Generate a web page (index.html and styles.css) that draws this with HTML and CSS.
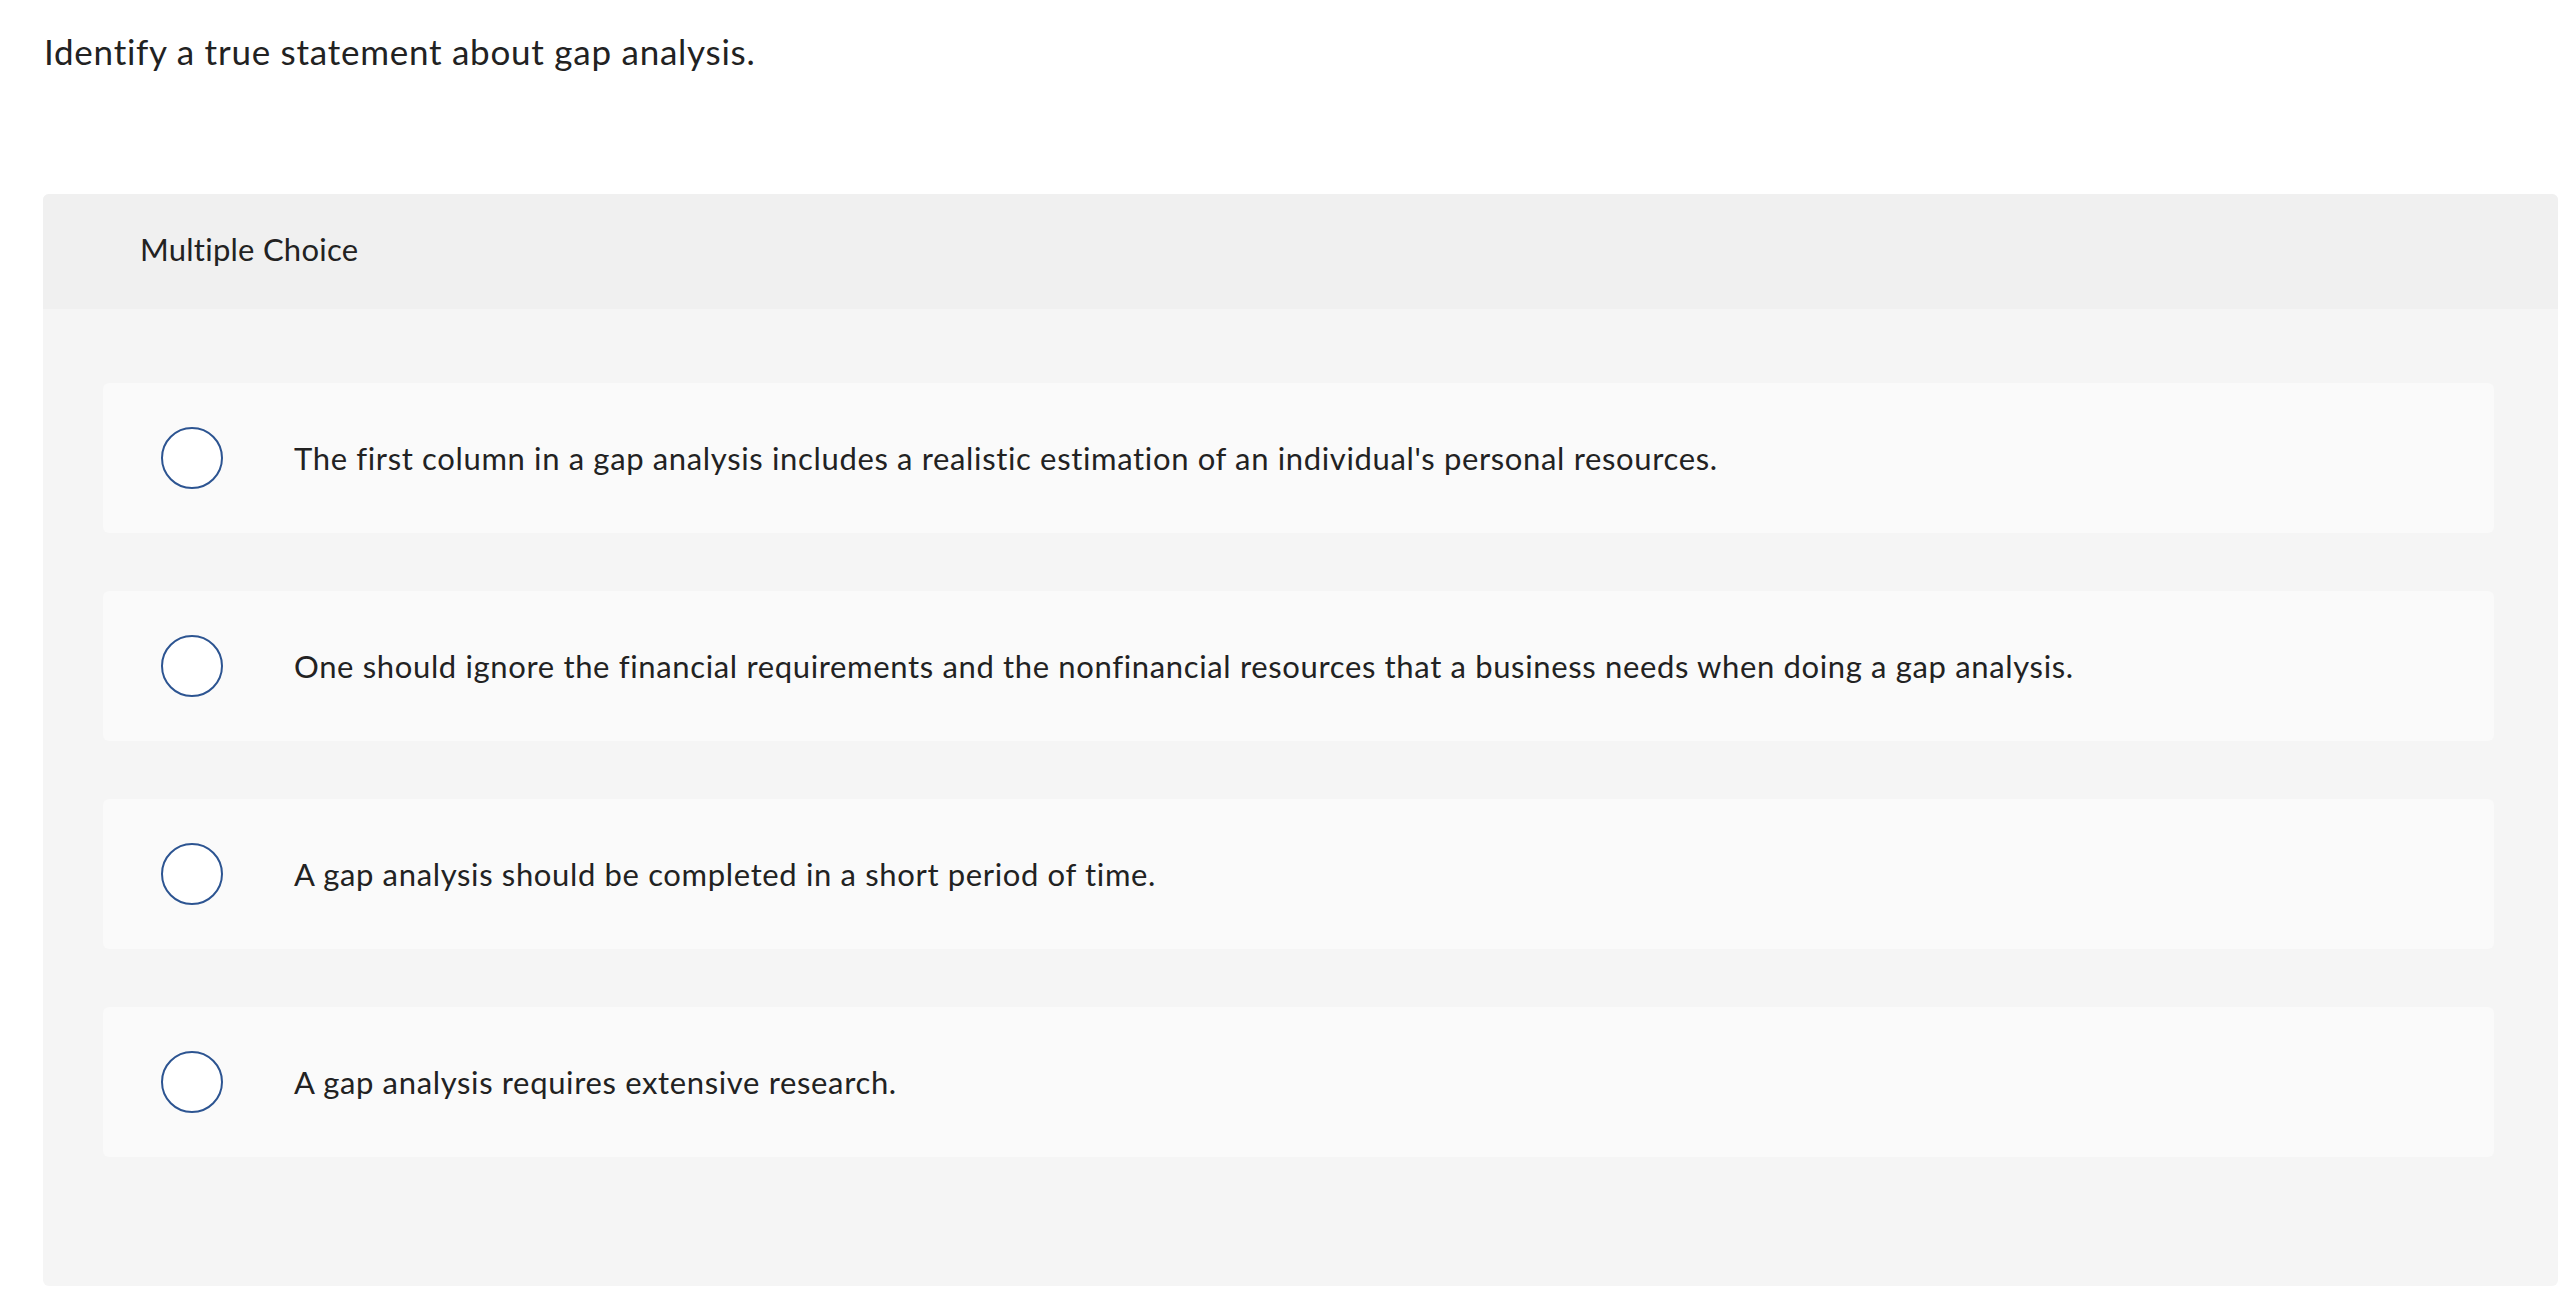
FILE: index.html
```html
<!DOCTYPE html>
<html lang="en">
<head>
    <meta charset="UTF-8">
    <meta name="viewport" content="width=device-width, initial-scale=1.0">
    <title>Multiple Choice</title>
    <link rel="stylesheet" href="styles.css">
</head>
<body>
    <p class="prompt">Identify a true statement about gap analysis.</p>

    <div class="question">
        <div class="question-header">Multiple Choice</div>
        <div class="choices">
            <label class="choice">
                <span class="radio"></span>
                <span class="choice-text">The first column in a gap analysis includes a realistic estimation of an individual's personal resources.</span>
            </label>
            <label class="choice">
                <span class="radio"></span>
                <span class="choice-text">One should ignore the financial requirements and the nonfinancial resources that a business needs when doing a gap analysis.</span>
            </label>
            <label class="choice">
                <span class="radio"></span>
                <span class="choice-text">A gap analysis should be completed in a short period of time.</span>
            </label>
            <label class="choice">
                <span class="radio"></span>
                <span class="choice-text">A gap analysis requires extensive research.</span>
            </label>
        </div>
    </div>
</body>
</html>
```

FILE: styles.css
```css
body {
    margin: 0;
    padding: 0;
    font-family: Lato, "Liberation Sans", Arial, sans-serif;
    font-variant-ligatures: none;
    color: #222;
    background-color: white;
}
.prompt {
    margin: 0;
    padding: 31px 0 0 44px;
    font-size: 35px;
    line-height: 41px;
    letter-spacing: 0.75px;
}
.question {
    margin: 122px 8px 0 43px;
    border-radius: 6px;
    background-color: #f5f5f5;
    overflow: hidden;
}
.question-header {
    background-color: #f0f0f0;
    padding: 37px 0 42px 97px;
    font-size: 31px;
    line-height: 36px;
    letter-spacing: 0.25px;
}
.choices {
    display: flex;
    flex-direction: column;
    gap: 58px;
    padding: 74px 64px 129px 60px;
}
.choice {
    display: flex;
    align-items: center;
    height: 150px;
    padding-left: 58px;
    background-color: #fafafa;
    border-radius: 6px;
    cursor: pointer;
}
.radio {
    flex: none;
    width: 62px;
    height: 62px;
    box-sizing: border-box;
    border: 2px solid #2c5491;
    border-radius: 50%;
    background-color: white;
}
.choice-text {
    margin-left: 71px;
    font-size: 31px;
    line-height: 36px;
    letter-spacing: 0.65px;
}
```
